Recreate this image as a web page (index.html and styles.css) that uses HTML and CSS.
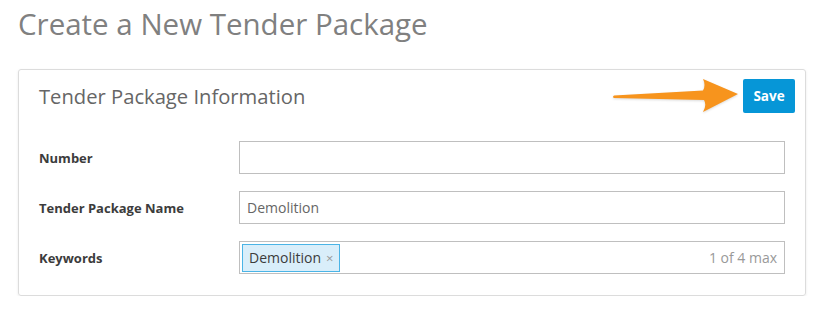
FILE: index.html
```html
<!DOCTYPE html>
<html>
<head>
    <meta charset="UTF-8">
    <meta name="viewport" content="width=device-width, initial-scale=1.0">
    <title>Create a New Tender Package</title>
    <link rel="stylesheet" href="styles.css">
</head>
<body>
<h1 class="page-title">Create a New Tender Package</h1>

<div class="card">
    <div class="card-header">
        <h2 class="card-title">Tender Package Information</h2>
        <div class="header-actions">
            <svg class="callout-arrow" viewBox="0 0 130 40" aria-hidden="true">
                <path d="M2 18.5 L91 13.5 Q94 8 91 2 L126 17 L91 35 Q95 28 92 23 L2 21 Q0 20 2 18.5 Z"></path>
            </svg>
            <button class="save-button">Save</button>
        </div>
    </div>

    <div class="form">
        <div class="form-row">
            <label class="form-label" for="number">Number</label>
            <input class="form-input" id="number" type="text" value="">
        </div>
        <div class="form-row">
            <label class="form-label" for="name">Tender Package Name</label>
            <input class="form-input" id="name" type="text" value="Demolition">
        </div>
        <div class="form-row">
            <label class="form-label">Keywords</label>
            <div class="tag-input">
                <span class="tag">Demolition <span class="tag-remove">&times;</span></span>
                <span class="tag-count">1 of 4 max</span>
            </div>
        </div>
    </div>
</div>
</body>
</html>
```

FILE: styles.css
```css
:root {
    --primary-color: #0696d7;
    --text-color: #3c3c3c;
    --muted-color: #999999;
    --border-color: #bfbfbf;
    --accent-color: #f7941d;
}

body {
    font-family: 'Open Sans', 'Noto Sans', sans-serif;
    color: var(--text-color);
    background-color: white;
    margin: 0;
    padding: 6px 14px 0 18px;
}

.page-title {
    margin: 0 0 27px;
    font-size: 29.5px;
    line-height: 36px;
    font-weight: 400;
    color: #808080;
}

.card {
    border: 1px solid #dcdcdc;
    border-radius: 3px;
    box-shadow: 0 1px 3px rgba(0, 0, 0, 0.08);
    padding-bottom: 21px;
}

.card-header {
    display: flex;
    align-items: center;
    justify-content: space-between;
    padding: 9px 10px 0 20px;
    margin-bottom: 28px;
}

.card-title {
    margin: 0;
    font-size: 20.2px;
    font-weight: 400;
    color: #666666;
}

.header-actions {
    position: relative;
}

.callout-arrow {
    position: absolute;
    right: 53px;
    top: -2px;
    width: 130px;
    height: 40px;
    fill: var(--accent-color);
    filter: drop-shadow(0 1px 1px rgba(0, 0, 0, 0.15));
}

.save-button {
    display: block;
    width: 52px;
    height: 34px;
    border: none;
    border-radius: 2px;
    background-color: var(--primary-color);
    color: white;
    font-family: inherit;
    font-size: 13.5px;
    font-weight: 700;
    cursor: pointer;
}

.form {
    display: flex;
    flex-direction: column;
    gap: 17px;
    padding: 0 20px;
}

.form-row {
    display: grid;
    grid-template-columns: 200px 1fr;
    align-items: center;
}

.form-label {
    font-size: 13px;
    font-weight: 700;
    color: var(--text-color);
}

.form-input {
    box-sizing: border-box;
    height: 33px;
    border: 1px solid var(--border-color);
    padding: 0 7px;
    font-family: inherit;
    font-size: 14px;
    color: #666666;
    outline: none;
}

.tag-input {
    box-sizing: border-box;
    height: 33px;
    border: 1px solid var(--border-color);
    padding: 2px 7px 2px 2px;
    display: flex;
    align-items: center;
    justify-content: space-between;
}

.tag {
    box-sizing: border-box;
    height: 28px;
    display: flex;
    align-items: center;
    gap: 5px;
    padding: 0 6px;
    border: 1px solid #4ab4e6;
    background-color: #d9eefa;
    font-size: 14px;
    color: var(--text-color);
}

.tag-remove {
    font-size: 13px;
    color: #999999;
}

.tag-count {
    font-size: 14px;
    color: var(--muted-color);
}
```
